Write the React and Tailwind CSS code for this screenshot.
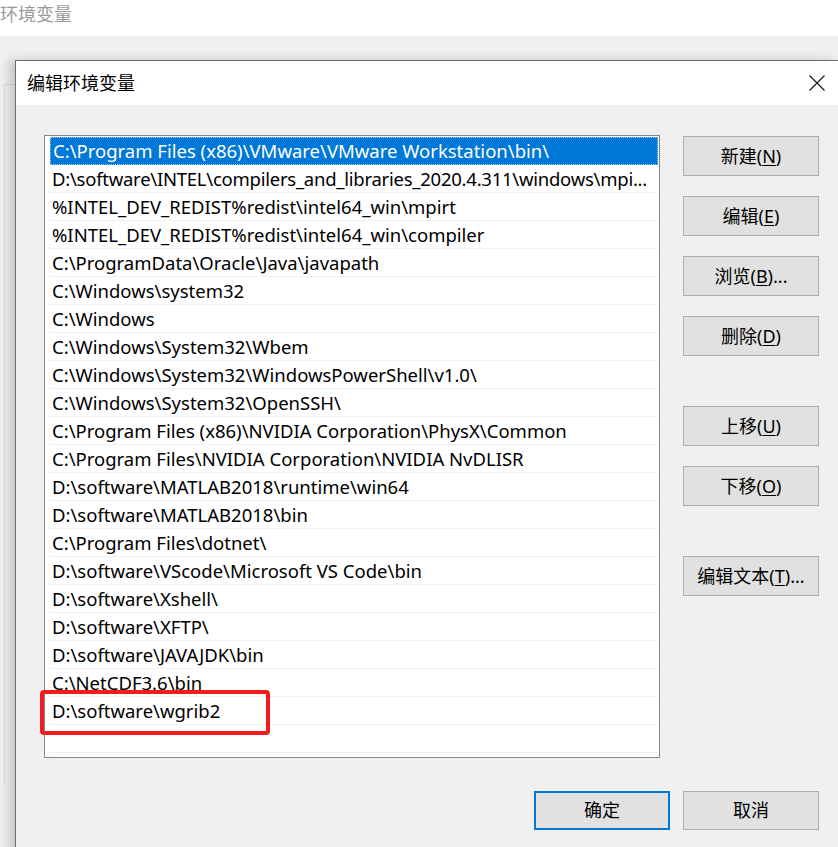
import React from "react";

const paths = [
  "C:\\Program Files (x86)\\VMware\\VMware Workstation\\bin\\",
  "D:\\software\\INTEL\\compilers_and_libraries_2020.4.311\\windows\\mpi...",
  "%INTEL_DEV_REDIST%redist\\intel64_win\\mpirt",
  "%INTEL_DEV_REDIST%redist\\intel64_win\\compiler",
  "C:\\ProgramData\\Oracle\\Java\\javapath",
  "C:\\Windows\\system32",
  "C:\\Windows",
  "C:\\Windows\\System32\\Wbem",
  "C:\\Windows\\System32\\WindowsPowerShell\\v1.0\\",
  "C:\\Windows\\System32\\OpenSSH\\",
  "C:\\Program Files (x86)\\NVIDIA Corporation\\PhysX\\Common",
  "C:\\Program Files\\NVIDIA Corporation\\NVIDIA NvDLISR",
  "D:\\software\\MATLAB2018\\runtime\\win64",
  "D:\\software\\MATLAB2018\\bin",
  "C:\\Program Files\\dotnet\\",
  "D:\\software\\VScode\\Microsoft VS Code\\bin",
  "D:\\software\\Xshell\\",
  "D:\\software\\XFTP\\",
  "D:\\software\\JAVAJDK\\bin",
  "C:\\NetCDF3.6\\bin",
  "D:\\software\\wgrib2",
  "",
];

const font = { fontFamily: '"Noto Sans", "Noto Sans CJK SC", sans-serif' };

function WinButton({ label, hot, rest = ")", className = "" }) {
  return (
    <div
      className={
        "w-[136px] h-[40px] bg-[#e1e1e1] border border-[#adadad] flex items-center justify-center text-[18px] text-black " +
        className
      }
    >
      <span>
        {label}
        <span className="underline underline-offset-2">{hot}</span>
        {rest}
      </span>
    </div>
  );
}

export default function App() {
  return (
    <div
      className="w-[838px] h-[847px] overflow-hidden bg-[#f0f0f0] relative"
      style={font}
    >
      {/* window behind */}
      <div className="h-[36px] bg-white flex items-start">
        <span className="text-[18px] leading-none text-[#9a9a9a] mt-[5px]">
          环境变量
        </span>
      </div>
      <div className="flex">
        <div className="w-[15px] shrink-0 pt-[48px] pl-[4px]">
          <div className="h-[700px] border-l border-t border-[#dcdcdc]"></div>
        </div>

        {/* dialog */}
        <div className="mt-[24px] flex-1 border-l border-t border-[#6e6e6e] shadow-[-6px_0_10px_rgba(0,0,0,0.18)]">
          <div className="h-[44px] bg-white flex items-center justify-between pl-[11px] pr-[14px]">
            <span className="text-[18px] text-black">编辑环境变量</span>
            <svg width="16" height="16" viewBox="0 0 16 16" className="mr-[-1px]">
              <path d="M0.5 0.5 L15.5 15.5 M15.5 0.5 L0.5 15.5" stroke="#111" strokeWidth="1.1" fill="none" />
            </svg>
          </div>

          <div className="bg-[#f0f0f0] h-[800px] flex">
            {/* list */}
            <div className="ml-[28px] mt-[30px] w-[616px] h-[623px] bg-white border border-[#828790] pt-[1px] pl-[5px] pr-[1px] relative">
              {paths.map((p, i) => (
                <div
                  key={i}
                  className={
                    "h-[28px] flex items-center border-b text-[18.5px] " +
                    (i === 1 ? "tracking-[-0.25px] " : "") +
                    (i === 0
                      ? "bg-[#0078d7] text-white border border-dotted border-[#9fcbf0]"
                      : "text-black border-[#f0f0f0]")
                  }
                >
                  <span className="pl-[2px] whitespace-nowrap overflow-hidden block w-full leading-[28px]">
                    {p}
                  </span>
                </div>
              ))}
              <div className="absolute left-[-5px] top-[554px] w-[230px] h-[45px] border-4 border-[#f21c1c] rounded-[4px]"></div>
            </div>

            {/* side buttons */}
            <div className="ml-[23px] mt-[31px] flex flex-col">
              <WinButton label="新建(" hot="N" />
              <WinButton label="编辑(" hot="E" className="mt-[20px]" />
              <WinButton label="浏览(" hot="B" rest=")..." className="mt-[20px]" />
              <WinButton label="删除(" hot="D" className="mt-[20px]" />
              <WinButton label="上移(" hot="U" className="mt-[50px]" />
              <WinButton label="下移(" hot="O" className="mt-[20px]" />
              <WinButton label="编辑文本(" hot="T" rest=")..." className="mt-[50px]" />
            </div>
          </div>
        </div>
      </div>

      {/* bottom buttons */}
      <div className="absolute left-[534px] top-[791px] flex gap-[13px]">
        <div className="w-[136px] h-[39px] bg-[#e1e1e1] border-2 border-[#0078d7] flex items-center justify-center text-[18px]">
          确定
        </div>
        <div className="w-[136px] h-[39px] bg-[#e1e1e1] border border-[#adadad] flex items-center justify-center text-[18px]">
          取消
        </div>
      </div>
    </div>
  );
}
